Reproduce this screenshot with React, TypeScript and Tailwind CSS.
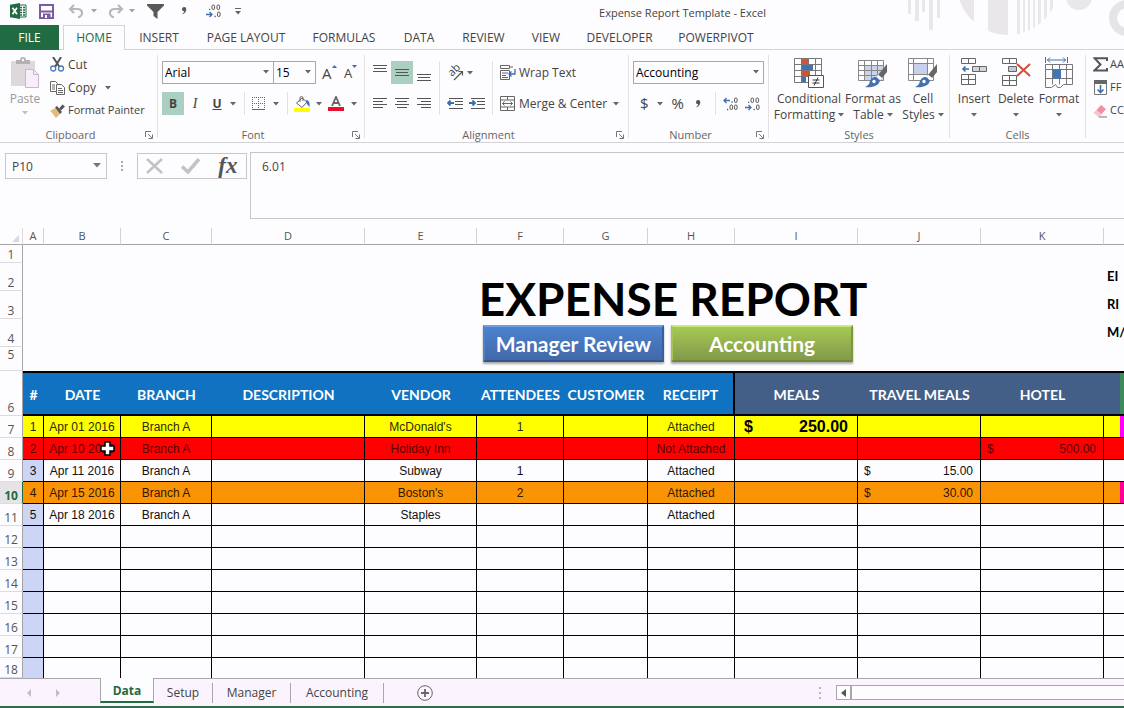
import React from "react";

type Kids = { children?: React.ReactNode };

const Caret = () => (
  <svg width="6" height="4" viewBox="0 0 6 4" className="shrink-0" aria-hidden="true">
    <path d="M0 0h6L3 3.6z" fill="#666" />
  </svg>
);

const Rule = () => <div className="w-px shrink-0 self-stretch bg-[#e3e0e5]" />;

const QuickBar = () => (
  <div className="flex h-[22px] shrink-0 items-center pl-[10px]">
    <button aria-label="Excel" className="w-[29px]">
      <svg width="17" height="16" viewBox="0 0 17 16">
        <path d="M8 2h8v12H8z" fill="#fff" stroke="#1f6b42" />
        <path d="M10 4.500h2M13 4.500h2M10 7h2M13 7h2M10 9.500h2M13 9.500h2M10 12h2M13 12h2" stroke="#1f6b42" strokeWidth="1.300" />
        <path d="M0 1.800 10 0v16L0 14.200z" fill="#1f6b42" />
        <path d="M2.500 4.800 7 11.200M7 4.800 2.500 11.200" stroke="#fff" strokeWidth="1.700" />
      </svg>
    </button>
    <button aria-label="Save" className="w-[29px]">
      <svg width="16" height="15" viewBox="0 0 16 15">
        <path d="M1 1h13v13H1z" fill="#fff" stroke="#7c5ca0" strokeWidth="2" />
        <path d="M2 7.500h11" stroke="#7c5ca0" strokeWidth="2" />
        <path d="M4 9.500h7.500V14H4z" fill="#7c5ca0" />
        <path d="M6 11h2v3H6z" fill="#fff" />
      </svg>
    </button>
    <button aria-label="Undo" className="flex w-[40px] items-center gap-[7px] opacity-60">
      <svg width="16" height="14" viewBox="0 0 16 14" fill="none" stroke="#8c8c8c" strokeWidth="2.200">
        <path d="M6 1 2 5l4 4M2 5h7c3 0 5 1.500 5 4s-2 4-4 4" />
      </svg>
      <Caret />
    </button>
    <button aria-label="Redo" className="flex w-[39px] items-center gap-[5px] opacity-60">
      <svg width="16" height="14" viewBox="0 0 16 14" fill="none" stroke="#8c8c8c" strokeWidth="2.200">
        <path d="M10 1l4 4-4 4M14 5H7C4 5 2 6.500 2 9s2 4 4 4" />
      </svg>
      <Caret />
    </button>
    <button aria-label="Filter" className="w-[35px]">
      <svg width="17" height="15" viewBox="0 0 17 15">
        <path d="M0 0h17v1.500L10.500 8v7l-4-3V8L0 1.500z" fill="#595959" />
      </svg>
    </button>
    <button aria-label="Comma Style" className="w-[24px]">
      <svg width="6" height="8" viewBox="0 0 6 8">
        <path d="M0 2.200a2 2 0 1 1 4.300 0C4.300 5 2.500 6.500.6 7.300L.3 6.600C1.500 6 2.200 5 2.200 4.200 1 4.300 0 3.500 0 2.200z" fill="#555" />
      </svg>
    </button>
    <button aria-label="Decrease Decimal" className="w-[29px]">
      <DecimalIcon more={false} />
    </button>
    <button aria-label="Customize Quick Access Toolbar" className="w-[6px]">
      <svg width="6" height="7" viewBox="0 0 6 7">
        <path d="M0 .5h6" stroke="#666" />
        <path d="M0 3h6L3 6.500z" fill="#666" />
      </svg>
    </button>
  </div>
);

function DecimalIcon({ more }: { more: boolean }) {
  const zero = (x: number, y: number) => <rect x={x} y={y} width="2.600" height="4.500" rx="1.300" />;
  return (
    <svg width="16" height="14" viewBox="0 0 16 14" fill="none" stroke="#555">
      {more ? (
        <>
          <path d="M7 3.500H1M3.500 1 1 3.500 3.500 6" stroke="#3c6eb0" strokeWidth="1.300" />
          <path d="M8.500 5h1.200M4 12.500h1.200" strokeWidth="1.300" />
          {zero(11.5, 1)}
          {zero(7, 8)}
          {zero(11.5, 8)}
        </>
      ) : (
        <>
          <path d="M0 10.500h6M3.500 8 6 10.500 3.500 13" stroke="#3c6eb0" strokeWidth="1.300" />
          <path d="M3 5.300h1.200M8.500 12.500h1.200" strokeWidth="1.300" />
          {zero(6, 1)}
          {zero(11, 1)}
          {zero(11.5, 8)}
        </>
      )}
    </svg>
  );
}

const Decoration = () => (
  <svg width="220" height="48" viewBox="0 0 220 48" className="absolute top-0 right-0" aria-hidden="true">
    <defs>
      <clipPath id="disc">
        <circle cx="104" cy="-16" r="51" />
      </clipPath>
    </defs>
    <g fill="#eae7ea">
      <path d="M4 0h3v14H4zM11 0h4v21h-4zM18 0h3v12h-3zM25 0h4v30h-4zM33 0h3v18h-3z" />
      <g clipPath="url(#disc)">
        <path d="M50 0h20v48H50zM84 0h20v48H84zM113 0h3v48h-3zM119 0h2v48h-2zM124 0h2v48h-2zM129 0h2v48h-2zM134 0h3v48h-3zM140 0h3v48h-3zM146 0h3v48h-3z" />
      </g>
      <circle cx="175" cy="-3" r="13" />
    </g>
    <circle cx="223" cy="18" r="14" fill="none" stroke="#e6e4e6" strokeWidth="8" />
  </svg>
);

const tabs: [string, string][] = [
  ["INSERT", "w-[68px]"],
  ["PAGE LAYOUT", "w-[106px]"],
  ["FORMULAS", "w-[90px]"],
  ["DATA", "w-[60px]"],
  ["REVIEW", "w-[69px]"],
  ["VIEW", "w-[56px]"],
  ["DEVELOPER", "w-[91px]"],
  ["POWERPIVOT", "w-[102px]"],
];

const RibbonTabs = () => (
  <nav className="flex h-[25px] shrink-0">
    <button className="w-[59px] shrink-0 bg-[#216b43] text-white">FILE</button>
    <div className="w-1 shrink-0 border-b border-[#d5d2d7]" />
    <button className="w-[62px] shrink-0 border-x border-t border-[#d5d2d7] text-[#216b43]">HOME</button>
    <div className="flex flex-1 border-b border-[#d5d2d7] pt-[2px]">
      {tabs.map(([name, width]) => (
        <button key={name} className={`${width} shrink-0 whitespace-nowrap`}>
          {name}
        </button>
      ))}
    </div>
  </nav>
);

function Group({ name, width, launcher = true, children }: Kids & { name: string; width: string; launcher?: boolean }) {
  return (
    <section className={`${width} flex shrink-0 pt-[5px]`}>
      <div className="flex min-w-0 flex-1 flex-col">
        <div className="flex h-[70px] flex-col">{children}</div>
        <div className={`flex h-[17px] items-center pt-[3px] pr-1 text-[#666] ${launcher ? "" : "pl-4"}`}>
          <span className="flex-1 text-center text-[11px] leading-[14px]">{name}</span>
          <span className="flex w-3 justify-end">
            {launcher && (
              <button aria-label={`${name} settings`}>
                <svg width="8" height="8" viewBox="0 0 8 8" fill="none" stroke="#777">
                  <path d="M.5 6V.5H6M3 3l4 4M7.500 3.500v4h-4" />
                </svg>
              </button>
            )}
          </span>
        </div>
      </div>
      <div className="flex pb-1">
        <Rule />
      </div>
    </section>
  );
}

const ClipboardGroup = () => (
  <Group name="Clipboard" width="w-[158px]">
    <div className="flex">
      <button className="flex w-[50px] flex-col items-center pt-[2px] text-[#9a9a9a]">
        <svg width="30" height="33" viewBox="0 0 30 33">
          <path d="M1 4h24v25H1z" fill="#dcd8dc" />
          <path d="M6 7V3h4a3 3 0 0 1 6 0h4v4z" fill="#b4b1b4" />
          <circle cx="13" cy="3" r="1.200" fill="#fff" />
          <path d="M15.500 12.500h8l5 5v13h-13z" fill="#f8eef9" stroke="#cbb4d3" />
          <path d="M23.500 12.500v5h5" fill="none" stroke="#cbb4d3" />
        </svg>
        <span className="leading-[18px]">Paste</span>
        <span className="pt-[3px] opacity-40">
          <Caret />
        </span>
      </button>
      <div className="flex flex-col">
        <button className="flex h-[19px] items-center gap-[3px]">
          <svg width="15" height="15" viewBox="0 0 15 15" fill="none">
            <path d="M3 0l6.500 10M11 0 5 10" stroke="#555" strokeWidth="2" />
            <circle cx="3.200" cy="11.500" r="2.500" stroke="#4a7ab8" strokeWidth="1.300" />
            <circle cx="11" cy="11.500" r="2.500" stroke="#4a7ab8" strokeWidth="1.300" />
          </svg>
          Cut
        </button>
        <button className="flex h-[27px] items-center gap-[3px]">
          <svg width="15" height="14" viewBox="0 0 15 14" fill="#fff" stroke="#666">
            <path d="M.5.5h5l2 2v8h-7zM2 4h3M2 6h3M2 8h3" />
            <path d="M6.500 3.500h5l3 3v7h-8zM8 7.500h4M8 9.500h5M8 11.500h5" />
          </svg>
          Copy
          <span className="pl-[6px]">
            <Caret />
          </span>
        </button>
        <button className="flex h-[19px] items-center gap-[3px] text-[11px] whitespace-nowrap">
          <svg width="15" height="14" viewBox="0 0 15 14">
            <path d="M0 7l5-3 5 6-4 4C4 12 3 9 0 7z" fill="#e8b878" />
            <path d="M5 3.500 7 2l5 6-2 2z" fill="#555" />
            <path d="M9 4.500 12.500.5 15 2.500 11 6.500z" fill="#555" />
          </svg>
          Format Painter
        </button>
      </div>
    </div>
  </Group>
);

function Picker({ label, value, width }: { label: string; value: string; width: string }) {
  return (
    <div className={`${width} relative h-[23px] shrink-0`}>
      <select aria-label={label} className="h-full w-full appearance-none border border-[#aaa7ac] bg-[#fdfcfe] pl-[2px] text-black">
        <option>{value}</option>
      </select>
      <span className="pointer-events-none absolute top-[9px] right-[5px]">
        <Caret />
      </span>
    </div>
  );
}

const FontGroup = () => (
  <Group name="Font" width="w-[207px]">
    <div className="flex flex-col gap-2 pt-[6px] pl-1">
      <div className="flex h-[23px] items-center">
        <Picker label="Font" value="Arial" width="w-[112px]" />
        <div className="-ml-px flex">
          <Picker label="Font size" value="15" width="w-[43px]" />
        </div>
        <button aria-label="Increase font size" className="ml-[6px] flex w-[22px] items-start">
          <span className="text-[15px] leading-4">A</span>
          <svg width="5" height="3" viewBox="0 0 5 3"><path d="M2.500 0 5 3H0z" fill="#3c6eb0" /></svg>
        </button>
        <button aria-label="Decrease font size" className="flex items-start">
          <span className="text-[13px] leading-4">A</span>
          <svg width="5" height="3" viewBox="0 0 5 3"><path d="M0 0h5L2.500 3z" fill="#3c6eb0" /></svg>
        </button>
      </div>
      <div className="flex h-[23px] items-center">
        <button className="h-full w-[22px] bg-[#abcfc0] font-bold">B</button>
        <button className="w-[22px] font-['Liberation_Serif',serif] text-sm italic">I</button>
        <button className="w-[22px] font-bold underline">U</button>
        <span className="pl-[2px]">
          <Caret />
        </span>
        <span className="flex h-full pl-2">
          <Rule />
        </span>
        <button aria-label="Borders" className="ml-[7px] flex items-center gap-2">
          <svg width="13" height="13" viewBox="0 0 13 13" fill="none" stroke="#666">
            <path d="M.5 0v12M6.500 0v12M12.500 0v12M0 .5h13M0 6.500h13" strokeDasharray="1 1" />
            <path d="M0 12.500h13" />
          </svg>
          <Caret />
        </button>
        <span className="flex h-full pl-2">
          <Rule />
        </span>
        <button aria-label="Fill Color" className="ml-[6px] flex items-center gap-[5px]">
          <svg width="17" height="16" viewBox="0 0 17 16">
            <path d="M2.500 7 8 2l5 4-5 5.500z" fill="#fff" stroke="#666" />
            <path d="M6 6V2a1.500 1.500 0 0 1 3 0v3" fill="none" stroke="#666" />
            <path d="M12 4c3 0 4 3 3.500 7L13 8z" fill="#3c6eb0" />
            <path d="M0 12h16v4H0z" fill="#ffff00" />
          </svg>
          <Caret />
        </button>
        <button aria-label="Font Color" className="ml-[6px] flex items-center gap-[7px]">
          <svg width="16" height="15" viewBox="0 0 16 15">
            <path d="M4 10 8 1l4 9M5.500 7h5" fill="none" stroke="#666" strokeWidth="1.800" />
            <path d="M0 11h16v4H0z" fill="#e8112d" />
          </svg>
          <Caret />
        </button>
      </div>
    </div>
  </Group>
);

function Lines({ d, on = false, label }: { d: string; on?: boolean; label: string }) {
  return (
    <button aria-label={label} className={`flex h-[23px] w-[22px] items-center justify-center ${on ? "bg-[#abcfc0]" : ""}`}>
      <svg width="14" height="16" viewBox="0 0 14 16" stroke="#555">
        <path d={d} />
      </svg>
    </button>
  );
}

function Indent({ right }: { right: boolean }) {
  return (
    <button aria-label={right ? "Increase Indent" : "Decrease Indent"} className="flex h-[23px] w-[22px] items-center">
      <svg width="16" height="12" viewBox="0 0 16 12" fill="none" stroke="#555">
        <path d="M2 .5h14M8 3.500h8M8 6.500h8M2 10.500h14" />
        <path d={right ? "M0 5h6M3.500 2.500 6 5 3.500 7.500" : "M7 5H1M3.500 2.500 1 5l2.500 2.500"} stroke="#3c6eb0" strokeWidth="1.800" />
      </svg>
    </button>
  );
}

const AlignmentGroup = () => (
  <Group name="Alignment" width="w-[264px]">
    <div className="flex pt-[6px] pl-1">
      <div className="grid grid-cols-3 gap-y-2">
        <Lines label="Top Align" d="M0 .5h14M1 3.500h12M0 6.500h14" />
        <Lines label="Middle Align" on d="M0 4.500h14M1 7.500h12M0 10.500h14" />
        <Lines label="Bottom Align" d="M0 9.500h14M1 12.500h12M0 15.500h14" />
        <Lines label="Align Left" d="M0 2.500h14M0 5.500h10M0 8.500h14M0 11.500h10" />
        <Lines label="Center" d="M0 2.500h14M2 5.500h10M0 8.500h14M2 11.500h10" />
        <Lines label="Align Right" d="M0 2.500h14M4 5.500h10M0 8.500h14M4 11.500h10" />
      </div>
      <div className="flex pl-1">
        <Rule />
      </div>
      <div className="flex w-[52px] flex-col gap-2 pl-[7px]">
        <button aria-label="Orientation" className="flex h-[23px] items-center gap-1">
          <svg width="16" height="18" viewBox="0 0 16 18" fill="none" stroke="#555" className="overflow-visible">
            <text x="0" y="0" transform="translate(5 13) rotate(-45)" fontSize="11" fill="#444" stroke="none">
              ab
            </text>
            <path d="M7 16l8-8M11.500 7.500h4v4" strokeWidth="1.200" />
          </svg>
          <Caret />
        </button>
        <div className="flex">
          <Indent right={false} />
          <Indent right />
        </div>
      </div>
      <Rule />
      <div className="flex flex-col gap-2 pl-[7px] whitespace-nowrap">
        <button className="flex h-[23px] items-center gap-[3px]">
          <svg width="16" height="15" viewBox="0 0 16 15" fill="none" stroke="#666">
            <path d="M.5.500h9v3h-9zM9 2h4M.5 5.500h9v9h-9zM2 8h6M2 10.500h4M2 12.500h6" />
            <path d="M15 4v5H9M11.500 6.500 9 9l2.500 2.500" stroke="#3c6eb0" strokeWidth="1.300" />
          </svg>
          Wrap Text
        </button>
        <button className="flex h-[23px] items-center gap-1">
          <svg width="15" height="15" viewBox="0 0 15 15" fill="none" stroke="#666">
            <path d="M.5.500h14v14H.5zM.5 4h14M.5 11h14M7.500.5V4M7.500 11v3.500" />
            <path d="M2.500 7.500h10M4.500 5.500l-2 2 2 2M10.500 5.500l2 2-2 2" stroke="#3c6eb0" />
          </svg>
          Merge &amp; Center
          <span className="pl-[2px]">
            <Caret />
          </span>
        </button>
      </div>
    </div>
  </Group>
);

const NumberGroup = () => (
  <Group name="Number" width="w-[140px]">
    <div className="flex flex-col gap-2 pt-[6px] pl-1">
      <Picker label="Number format" value="Accounting" width="w-[131px]" />
      <div className="flex h-[23px] items-center">
        <button aria-label="Accounting format" className="ml-[7px] flex items-center gap-2">
          <span className="text-[15px]">$</span>
          <Caret />
        </button>
        <button className="ml-[9px] text-[15px]">%</button>
        <button aria-label="Comma Style" className="ml-3 w-[11px]">
          <svg width="6" height="8" viewBox="0 0 6 8">
            <path d="M0 2.200a2 2 0 1 1 4.300 0C4.300 5 2.500 6.500.6 7.300L.3 6.600C1.500 6 2.200 5 2.200 4.200 1 4.300 0 3.500 0 2.200z" fill="#555" />
          </svg>
        </button>
        <span className="flex h-full pl-2">
          <Rule />
        </span>
        <span className="flex gap-[6px] pl-[7px]">
          <button aria-label="Increase Decimal"><DecimalIcon more /></button>
          <button aria-label="Decrease Decimal"><DecimalIcon more={false} /></button>
        </span>
      </div>
    </div>
  </Group>
);

function BigButton({ width, top, bottom, icon }: { width: string; top: string; bottom?: string; icon: React.ReactNode }) {
  return (
    <button className={`${width} flex shrink-0 flex-col items-center pt-[2px] whitespace-nowrap`}>
      <span className="flex h-[34px] items-start">{icon}</span>
      <span className="leading-4">{top}</span>
      <span className="flex h-4 items-center gap-[3px] leading-4">
        {bottom}
        <Caret />
      </span>
    </button>
  );
}

const Brush = () => (
  <>
    <path d="M29 7v8l-5 6-4-3z" fill="#666" />
    <path d="M20 17.500l4 3.500-1.500 2-4-3z" fill="#fff" />
    <path d="M18.500 20.500l3.500 3C21 29 14 31 7 30c4-2 4-3 5-6 2-4 5-4.500 6.500-3.500z" fill="#4472b0" />
    <circle cx="16" cy="24.500" r="1.700" fill="#fff" />
  </>
);

const StylesGroup = () => (
  <Group name="Styles" width="w-[181px]" launcher={false}>
    <div className="flex pl-1">
      <BigButton
        width="w-[72px]"
        top="Conditional"
        bottom="Formatting"
        icon={
          <svg width="30" height="31" viewBox="0 0 30 31" fill="none" stroke="#777">
            <path d="M.5 1.500h27v24H.5zM.5 7.500h27M.5 13.500h27M.5 19.500h27M7.500 1.500v24M14.500 1.500v24M21.500 1.500v24" />
            <path d="M8 2h6v5H8zM8 14h8v5H8z" fill="#d9512f" stroke="none" />
            <path d="M8 8h11v5H8zM8 20h4v5H8z" fill="#4472b0" stroke="none" />
            <path d="M14.500 18.500h15v12h-15z" fill="#fff" stroke="#555" />
            <path d="M18.500 23h7M18.500 26h7M24 20.500l-4 8" stroke="#333" />
          </svg>
        }
      />
      <BigButton
        width="w-[56px]"
        top="Format as"
        bottom="Table"
        icon={
          <svg width="30" height="31" viewBox="0 0 30 31">
            <path d="M.5 3.500h25v20H.5z" fill="#fff" />
            <path d="M7 9h19v15H7z" fill="#c9d3ea" />
            <path d="M.5 3.500h25v20H.5zM.5 8.500h25M.5 13.500h25M.5 18.500h25M6.500 3.500v20M13.500 3.500v20M19.500 3.500v20" fill="none" stroke="#888" />
            <Brush />
          </svg>
        }
      />
      <BigButton
        width="w-[44px]"
        top="Cell"
        bottom="Styles"
        icon={
          <svg width="30" height="31" viewBox="0 0 30 31">
            <path d="M.5 1.500h25v22H.5zM.5 6.500h25M.5 17.500h25M5.500 1.500v22M19.500 1.500v22" fill="#fff" stroke="#888" />
            <path d="M6 7h13v10H6z" fill="#c9d0ee" />
            <Brush />
          </svg>
        }
      />
    </div>
  </Group>
);

const CellsGroup = () => (
  <Group name="Cells" width="w-[136px]" launcher={false}>
    <div className="flex pl-[3px]">
      <BigButton
        width="w-[42px]"
        top="Insert"
        icon={
          <svg width="28" height="31" viewBox="0 0 28 31" fill="none" stroke="#666">
            <path d="M1.500 1.500h14v5h-14zM8.500 1.500v5M1.500 17.500h14v10h-14zM1.500 22.500h14M8.500 17.500v10" />
            <path d="M12.500 9.500h14v5h-14zM19.500 9.500v5" fill="#d0d7e0" />
            <path d="M9 12H3M5.500 9.500 3 12l2.500 2.500" stroke="#3c6eb0" strokeWidth="1.600" />
          </svg>
        }
      />
      <BigButton
        width="w-[42px]"
        top="Delete"
        icon={
          <svg width="30" height="31" viewBox="0 0 30 31" fill="none" stroke="#666">
            <path d="M1.500 1.500h14v5h-14zM8.500 1.500v5M1.500 18.500h14v10h-14zM1.500 23.500h14M8.500 18.500v10" />
            <path d="M7.500 9.500h8v5h-8z" fill="#bccbe0" />
            <path d="M16 7l13 12M29 7 16 19" stroke="#d84b3a" strokeWidth="2" />
          </svg>
        }
      />
      <BigButton
        width="w-[44px]"
        top="Format"
        icon={
          <svg width="30" height="31" viewBox="0 0 30 31" fill="none" stroke="#777">
            <path d="M1.500 0v6M23.500 0v6M3 3h19M6 .5 3.500 3 6 5.500M19 .5 21.500 3 19 5.500" stroke="#3c6eb0" />
            <path d="M1.500 7.500h27v20h-9l-3 3h-3l-2-3-4 3h-6zM1.500 12.500h27M1.500 21.500h27M8.500 7.500v20M15.500 7.500v20M22.500 7.500v20" />
            <path d="M9 12.500h8v9H9z" fill="#3f74b8" stroke="none" />
          </svg>
        }
      />
    </div>
  </Group>
);

const EditingGroup = () => (
  <section className="flex min-w-0 flex-1 flex-col overflow-hidden pt-[5px] pl-[7px] text-[11px] whitespace-nowrap">
    <button className="flex h-[19px] items-center gap-[2px]">
      <svg width="15" height="15" viewBox="0 0 15 15" className="shrink-0">
        <path d="M14 4V1.200H1.500L7.500 7.500l-6 6H14V11" fill="none" stroke="#555" strokeWidth="2" />
      </svg>
      AA
    </button>
    <button className="flex h-[27px] items-center gap-[2px]">
      <svg width="15" height="15" viewBox="0 0 15 15" fill="none" className="shrink-0">
        <path d="M1.500.5h12v14h-12z" fill="#fff" stroke="#777" />
        <path d="M1 0h13v4H1z" fill="#666" />
        <path d="M7.500 5v7.500M4.500 9.500l3 3 3-3" stroke="#3c6eb0" strokeWidth="1.600" />
      </svg>
      FF
    </button>
    <button className="flex h-[19px] items-center gap-[2px]">
      <svg width="15" height="14" viewBox="0 0 15 14" className="shrink-0">
        <path d="M1 9 8 1l5 4-7 8z" fill="#ee8fa6" />
        <path d="M1 9l2.500-3 5 4L6 13z" fill="#f7c5d0" />
        <path d="M6 13h8" stroke="#777" />
      </svg>
      CC
    </button>
  </section>
);

const FormulaBar = () => (
  <div className="flex h-[85px] shrink-0 items-start pt-[9px] pl-[5px]">
    <div className="relative mt-px h-[26px] w-[102px] shrink-0">
      <input aria-label="Name Box" defaultValue="P10" className="h-full w-full border border-[#c9c6cb] bg-transparent pl-[6px]" />
      <span className="pointer-events-none absolute top-[10px] right-[6px]">
        <svg width="8" height="5" viewBox="0 0 8 5"><path d="M0 0h8L4 4.500z" fill="#777" /></svg>
      </span>
    </div>
    <svg width="30" height="28" viewBox="0 0 30 28" className="shrink-0" aria-hidden="true">
      <path d="M14 9h2v2h-2zM14 13h2v2h-2zM14 17h2v2h-2z" fill="#aaa" />
    </svg>
    <div className="mt-px flex h-[26px] w-[110px] shrink-0 items-center justify-around border border-[#c9c6cb]">
      <button aria-label="Cancel">
        <svg width="18" height="16" viewBox="0 0 18 16"><path d="M1 1l15 14M16 1 1 15" stroke="#c4c2c5" strokeWidth="2.500" /></svg>
      </button>
      <button aria-label="Enter">
        <svg width="20" height="16" viewBox="0 0 20 16"><path d="M1 8.500l6 5.500L18 1" fill="none" stroke="#c4c2c5" strokeWidth="3.500" /></svg>
      </button>
      <button className="font-['Liberation_Serif',serif] text-[23px] leading-5 font-bold text-[#555] italic">fx</button>
    </div>
    <textarea
      aria-label="Formula"
      defaultValue="6.01"
      className="ml-[3px] h-[67px] flex-1 resize-none border border-r-0 border-[#c9c6cb] bg-transparent px-[11px] py-1 leading-5"
    />
  </div>
);

const columns: [string, string][] = [
  ["A", "w-[21px]"],
  ["B", "w-[77px]"],
  ["C", "w-[91px]"],
  ["D", "w-[153px]"],
  ["E", "w-[112px]"],
  ["F", "w-[87px]"],
  ["G", "w-[84px]"],
  ["H", "w-[87px]"],
  ["I", "w-[123px]"],
  ["J", "w-[123px]"],
  ["K", "w-[123px]"],
];

const headings = [
  "#", "DATE", "BRANCH", "DESCRIPTION", "VENDOR", "ATTENDEES", "CUSTOMER", "RECEIPT", "MEALS", "TRAVEL MEALS", "HOTEL",
];

type Entry = { cells: string[]; tone: string; edge: string };

const blank = ["", "", "", "", "", "", "", "", "", "", ""];

const entries: Entry[] = [
  { cells: ["1", "Apr 01 2016", "Branch A", "", "McDonald's", "1", "", "Attached", "250.00", "", ""], tone: "bg-[#ffff00] text-[#2a2a00]", edge: "bg-[#ff00ff]" },
  { cells: ["2", "Apr 10 2016", "Branch A", "", "Holiday Inn", "", "", "Not Attached", "", "", "500.00"], tone: "bg-[#ff0000] text-[#5a0000]", edge: "bg-[#ff0000]" },
  { cells: ["3", "Apr 11 2016", "Branch A", "", "Subway", "1", "", "Attached", "", "15.00", ""], tone: "text-[#111]", edge: "" },
  { cells: ["4", "Apr 15 2016", "Branch A", "", "Boston's", "2", "", "Attached", "", "30.00", ""], tone: "bg-[#fb9404] text-[#2e1800]", edge: "bg-[#ff0099]" },
  { cells: ["5", "Apr 18 2016", "Branch A", "", "Staples", "", "", "Attached", "", "", ""], tone: "text-[#111]", edge: "" },
  ...Array.from({ length: 7 }, () => ({ cells: blank, tone: "text-[#111]", edge: "" })),
];

function RowHead({ n, height = "h-[22px]", top = false }: { n: number; height?: string; top?: boolean }) {
  const active = n === 10;
  return (
    <th
      scope="row"
      className={`${height} border-r border-b border-b-[#dedbe0] p-0 font-['Open_Sans',sans-serif] text-[12px] leading-[15px] ${
        top ? "align-top" : "align-bottom"
      } ${
        active ? "border-r-[#216b43] bg-[#e6e3e7] font-bold text-[#216b43]" : "border-r-[#a5a3a7] bg-[#fdfcfe] font-normal text-[#555]"
      }`}
    >
      {n}
    </th>
  );
}

const Money = ({ amount, bold }: { amount: string; bold: boolean }) => (
  <div className={`flex justify-between ${bold ? "px-[9px] text-base leading-5 font-bold text-black" : "pr-[7px] pl-[6px]"}`}>
    <span>$</span>
    <span>{amount}</span>
  </div>
);

const PlusCursor = () => (
  <svg width="15" height="15" viewBox="0 0 15 15" className="absolute top-1 left-[56px]" aria-hidden="true">
    <path d="M5 1h5v4h4v5h-4v4H5v-4H1V5h4z" fill="#fff" stroke="#000" strokeWidth="1.500" />
  </svg>
);

const SideLabel = ({ text }: { text: string }) => (
  <td colSpan={2} className="p-0 pl-[3px] align-middle font-['Lato',sans-serif] text-[13px] font-bold whitespace-nowrap text-black">
    {text}
  </td>
);

const Sheet = () => (
  <main className="min-h-0 flex-1 overflow-hidden">
    <table className="w-full table-fixed border-separate border-spacing-0">
      <colgroup>
        <col className="w-[23px]" />
        {columns.map(([c, w]) => (
          <col key={c} className={w} />
        ))}
        <col className="w-[16px]" />
        <col />
      </colgroup>
      <thead>
        <tr className="h-[17px] text-[11px] leading-4 text-[#555]">
          <td className="border-r border-b border-r-[#dedbe0] border-b-[#a5a3a7] p-0 align-bottom">
            <svg width="10" height="10" viewBox="0 0 10 10" className="ml-[11px]"><path d="M8 1v7H1z" fill="#dcd9de" /></svg>
          </td>
          {columns.map(([c]) => (
            <th key={c} scope="col" className="border-r border-b border-r-[#d5d2d7] border-b-[#a5a3a7] p-0 font-normal">
              {c}
            </th>
          ))}
          <th colSpan={2} className="border-b border-[#a5a3a7] p-0" />
        </tr>
      </thead>
      <tbody>
        <tr>
          <RowHead n={1} height="h-[18px]" />
          <td rowSpan={5} colSpan={4} />
          <td rowSpan={5} colSpan={6} className="p-0 align-top">
            <div className="flex flex-col items-center pt-[28px]">
              <h1 className="font-['Lato',sans-serif] text-[46px] leading-[52px] font-bold whitespace-nowrap text-black">EXPENSE REPORT</h1>
              <div className="flex gap-[7px] pr-[10px] font-['Lato',sans-serif] text-[21px] leading-8 font-bold text-white">
                <button className="h-[37px] w-[181px] border-2 border-t-[#6b9fe6] border-r-[#35609f] border-b-[#36558d] border-l-[#4a82cc] bg-linear-to-b from-[#4b83d0] to-[#4268a8] whitespace-nowrap shadow-[0_2px_2px_#aaa]">
                  Manager Review
                </button>
                <button className="h-[37px] w-[182px] border-2 border-t-[#c9ea7c] border-r-[#7d983f] border-b-[#6f8737] border-l-[#a4c652] bg-linear-to-b from-[#a5c954] to-[#83994a] shadow-[0_2px_2px_#aaa]">
                  Accounting
                </button>
              </div>
            </div>
          </td>
          <td rowSpan={5} />
          <td colSpan={2} />
        </tr>
        <tr>
          <RowHead n={2} height="h-[28px]" />
          <SideLabel text="EI" />
        </tr>
        <tr>
          <RowHead n={3} height="h-[28px]" />
          <SideLabel text="RI" />
        </tr>
        <tr>
          <RowHead n={4} height="h-[28px]" />
          <SideLabel text="M/" />
        </tr>
        <tr>
          <RowHead n={5} height="h-[24px]" top />
          <td colSpan={2} />
        </tr>
        <tr className="font-['Lato',sans-serif] text-sm text-white">
          <RowHead n={6} height="h-[45px]" />
          {headings.map((h, i) => (
            <th
              key={h}
              scope="col"
              className={`border-t-2 border-b-2 border-black px-0 pt-[2px] pb-0 whitespace-nowrap ${
                i < 7 ? "bg-[#1072c0]" : i === 7 ? "border-r-2 bg-[#1072c0]" : "bg-[#445f87]"
              }`}
            >
              {h}
            </th>
          ))}
          <td className="border-t-2 border-b-2 border-black bg-[#445f87]" />
          <td className="border-t-2 border-b-2 border-black bg-[#3f8a5c]" />
        </tr>
        {entries.map((row, r) => (
          <tr key={r} className={`font-['Liberation_Sans',sans-serif] text-[12px] leading-4 ${row.tone}`}>
            <RowHead n={r + 7} height={r === entries.length - 1 ? "h-5" : "h-[22px]"} />
            {row.cells.map((text, c) => (
              <td
                key={c}
                className={`border-r border-black p-0 text-center whitespace-nowrap ${r === entries.length - 1 ? "" : "border-b"} ${
                  c === 0 && r !== 0 && r !== 1 && r !== 3 ? "bg-[#ccd5f6]" : ""
                }`}
              >
                {c > 7 && text ? (
                  <Money amount={text} bold={r === 0} />
                ) : r === 1 && c === 1 ? (
                  <div className="relative">
                    {text}
                    <span className="absolute inset-x-0 -top-1">
                      <PlusCursor />
                    </span>
                  </div>
                ) : (
                  text
                )}
              </td>
            ))}
            <td className={`border-black p-0 ${r === entries.length - 1 ? "" : "border-b"}`} />
            <td className={`border-black p-0 ${r === entries.length - 1 ? "" : "border-b"} ${row.edge}`} />
          </tr>
        ))}
      </tbody>
    </table>
  </main>
);

const SheetTabs = () => (
  <footer className="flex h-[30px] shrink-0 border-b-2 border-[#2f6a4a] bg-[#fbf3fd]">
    <div className="flex w-[100px] shrink-0 items-center border-t border-[#aaa7ac] pl-[27px]">
      <button aria-label="Previous sheet" className="w-[28px]">
        <svg width="5" height="8" viewBox="0 0 5 8"><path d="M4 0v8L0 4z" fill="#c2bdc4" /></svg>
      </button>
      <button aria-label="Next sheet">
        <svg width="5" height="8" viewBox="0 0 5 8"><path d="M1 0v8l4-4z" fill="#c2bdc4" /></svg>
      </button>
    </div>
    <button className="mb-[3px] w-[54px] shrink-0 border-x border-b-2 border-x-[#aaa7ac] border-b-[#216b43] bg-[#fdfcfe] pt-[3px] font-bold text-[#216b43]">
      Data
    </button>
    <div className="flex flex-1 items-center border-t border-[#aaa7ac] text-[12px]">
      <button className="h-5 w-[59px] shrink-0 border-r border-[#aaa7ac]">Setup</button>
      <button className="h-5 w-[78px] shrink-0 border-r border-[#aaa7ac]">Manager</button>
      <button className="h-5 w-[93px] shrink-0 border-r border-[#aaa7ac]">Accounting</button>
      <button aria-label="New sheet" className="ml-[33px] shrink-0">
        <svg width="16" height="16" viewBox="0 0 16 16" fill="none" stroke="#666">
          <circle cx="8" cy="8" r="7.300" />
          <path d="M8 4v8M4 8h8" strokeWidth="1.800" />
        </svg>
      </button>
      <div className="min-w-4 flex-1" />
      <svg width="4" height="12" viewBox="0 0 4 12" className="shrink-0" aria-hidden="true">
        <path d="M1 0h2v2H1zM1 5h2v2H1zM1 10h2v2H1z" fill="#b9b5bb" />
      </svg>
      <div className="ml-[14px] flex h-[15px] w-[288px] shrink-0 border border-r-0 border-[#aaa7ac] bg-[#fdfcfe]">
        <button aria-label="Scroll left" className="flex w-[15px] items-center justify-center border-r-2 border-[#aaa7ac]">
          <svg width="5" height="8" viewBox="0 0 5 8"><path d="M5 0v8L0 4z" fill="#555" /></svg>
        </button>
      </div>
    </div>
  </footer>
);

export default function App() {
  return (
    <div className="flex h-screen flex-col overflow-hidden bg-[#fdfcfe] font-['Open_Sans',sans-serif] text-[12px] text-[#444]">
      <header className="relative flex h-[25px] shrink-0">
        <Decoration />
        <QuickBar />
        <div className="flex-1 pt-1 text-center text-[11px] leading-[18px]">Expense Report Template - Excel</div>
      </header>
      <RibbonTabs />
      <div className="flex h-[93px] shrink-0 overflow-hidden border-b border-[#d5d2d7]">
        <ClipboardGroup />
        <FontGroup />
        <AlignmentGroup />
        <NumberGroup />
        <StylesGroup />
        <CellsGroup />
        <EditingGroup />
      </div>
      <FormulaBar />
      <Sheet />
      <SheetTabs />
    </div>
  );
}
